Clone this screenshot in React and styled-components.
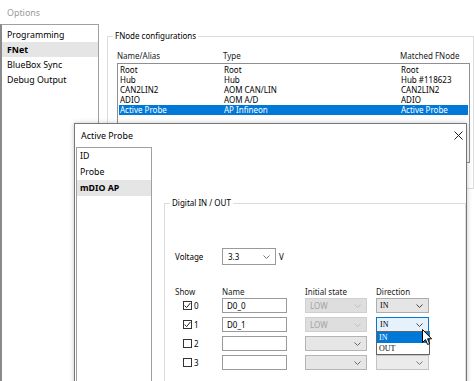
import React from 'react';
import styled, { createGlobalStyle } from 'styled-components';

const GlobalStyle = createGlobalStyle`
  html, body { margin: 0; padding: 0; background: #fff; }
  body { font-family: "Noto Sans", "Open Sans", sans-serif; color: #000; overflow: hidden; }
  * { box-sizing: border-box; }
`;

const Window = styled.div`
  position: relative;
  width: 474px;
  height: 381px;
  overflow: hidden;
  background: #fff;
  display: flex;
  flex-direction: column;
`;

const TitleBar = styled.div`
  height: 24px;
  flex: none;
  display: flex;
  align-items: center;
  padding: 1px 0 0 7px;
  font-size: 8.9px;
  color: #9a9a9a;
`;

const Body = styled.div`
  flex: 1;
  display: flex;
  min-height: 0;
`;

const SideNav = styled.div`
  width: 99px;
  flex: none;
  border: 1px solid #a0a0a0;
  border-left: 2px solid #8a8a8a;
  border-bottom: none;
  padding-top: 2px;
`;

const NavItem = styled.div`
  height: 15px;
  display: flex;
  align-items: center;
  padding-left: 5px;
  font-size: 8.8px;
  font-weight: ${p => (p.$active ? 700 : 400)};
  background: ${p => (p.$active ? '#e5e5e5' : 'transparent')};
`;

const Main = styled.div`
  flex: 1;
  padding-left: 8px;
  min-width: 0;
`;

const GroupBox = styled.fieldset`
  margin: ${p => p.$top}px 0 0 0;
  padding: ${p => p.$padTop}px 3px 0 ${p => p.$padLeft}px;
  border: 1px solid #dcdcdc;
  height: ${p => p.$height}px;
  min-inline-size: 0;
`;

const Legend = styled.legend`
  padding: 0 2px;
  margin-left: ${p => p.$offset}px;
  font-size: 8px;
  line-height: 12px;
  color: #000;
`;

const HeaderRow = styled.div`
  display: grid;
  grid-template-columns: ${p => p.$cols};
  font-size: 8px;
  line-height: 12px;
  height: 12px;
  color: #1a1a1a;
`;

const ListBox = styled.div`
  margin-top: 1px;
  border: 1px solid #8e8f94;
  height: 100px;
  padding: 1px;
  background: #fff;
`;

const ListRow = styled.div`
  display: grid;
  grid-template-columns: 104px 177px 1fr;
  height: 10px;
  line-height: 10px;
  padding-left: 1px;
  font-size: 8px;
  white-space: nowrap;
  background: ${p => (p.$selected ? '#0078d7' : 'transparent')};
  color: ${p => (p.$selected ? '#fff' : '#000')};
`;

const Dialog = styled.div`
  position: absolute;
  left: 74px;
  top: 123px;
  width: 393px;
  height: 272px;
  border: 1px solid #777;
  background: #fff;
  box-shadow: 0 0 5px rgba(0, 0, 0, 0.22);
  display: flex;
  flex-direction: column;
`;

const DialogTitle = styled.div`
  height: 23px;
  flex: none;
  display: flex;
  align-items: center;
  justify-content: space-between;
  padding: 0 0 1px 6px;
  font-size: 8.9px;
`;

const CloseButton = styled.div`
  width: 16px;
  height: 16px;
  display: flex;
  align-items: center;
  justify-content: center;
`;

const DialogBody = styled.div`
  flex: 1;
  display: flex;
  min-height: 0;
`;

const DialogNav = styled.div`
  width: 76px;
  flex: none;
  margin-left: 1px;
  border: 1px solid #a0a0a0;
  border-bottom: none;
`;

const DNavItem = styled.div`
  height: 16px;
  display: flex;
  align-items: center;
  padding-left: 3px;
  font-size: 8.8px;
  font-weight: ${p => (p.$active ? 700 : 400)};
  background: ${p => (p.$active ? '#e5e5e5' : 'transparent')};
`;

const DialogContent = styled.div`
  flex: 1;
  padding-left: 12px;
  min-width: 0;
`;

const VoltageRow = styled.div`
  margin-top: 39px;
  height: 17px;
  display: flex;
  align-items: center;
  font-size: 8px;
`;

const FieldLabel = styled.span`
  width: 47px;
  flex: none;
`;

const Unit = styled.span`
  margin-left: 3px;
`;

const Select = styled.div`
  position: relative;
  width: ${p => p.$w}px;
  height: ${p => p.$h}px;
  display: flex;
  align-items: center;
  justify-content: space-between;
  padding: 0 5px 0 ${p => p.$pl || 4}px;
  font-size: 8px;
  border: 1px solid ${p => p.$border};
  background: ${p => p.$bg};
  color: ${p => p.$color || '#000'};
  font-family: ${p => (p.$serif ? '"Liberation Serif", serif' : 'inherit')};
`;

const Table = styled.div`
  margin-top: 21px;
`;

const DataGrid = styled.div`
  display: grid;
  grid-template-columns: 47px 83px 71px 53px;
  grid-auto-rows: 15px;
  row-gap: 4px;
  font-size: 8px;
`;

const CheckCell = styled.div`
  display: flex;
  align-items: center;
  padding-left: 8px;
`;

const CheckBox = styled.span`
  width: 9px;
  height: 9px;
  border: 1px solid #333;
  background: #fff;
  display: flex;
  align-items: center;
  justify-content: center;
`;

const CheckLabel = styled.span`
  margin-left: 2px;
`;

const TextInput = styled.div`
  width: 65px;
  height: 15px;
  border: 1px solid #9a9a9a;
  display: flex;
  align-items: center;
  padding-left: 4px;
  background: #fff;
`;

const Popup = styled.div`
  position: absolute;
  left: -1px;
  top: 100%;
  width: 54px;
  border: 1px solid #646464;
  background: #fff;
  padding: 0;
  z-index: 2;
`;

const PopupItem = styled.div`
  height: 11px;
  line-height: 11px;
  padding-left: 2px;
  font-size: 8px;
  background: ${p => (p.$selected ? '#0078d7' : '#fff')};
  color: ${p => (p.$selected ? '#fff' : '#000')};
`;

const Cursor = styled.svg`
  position: absolute;
  left: 422px;
  top: 329px;
  z-index: 5;
`;

const Chevron = ({ color = '#555' }) => (
  <svg width="7" height="4" viewBox="0 0 7 4">
    <path d="M0.5 0.5 L3.5 3.5 L6.5 0.5" fill="none" stroke={color} strokeWidth="1" />
  </svg>
);

const Check = () => (
  <svg width="7" height="7" viewBox="0 0 7 7">
    <path d="M0.6 3.6 L2.6 5.6 L6.4 1" fill="none" stroke="#222" strokeWidth="1" />
  </svg>
);

const nodes = [
  ['Root', 'Root', 'Root'],
  ['Hub', 'Hub', 'Hub #118623'],
  ['CAN2LIN2', 'AOM CAN/LIN', 'CAN2LIN2'],
  ['ADIO', 'AOM A/D', 'ADIO'],
  ['Active Probe', 'AP Infineon', 'Active Probe'],
];

const dio = [
  { n: '0', checked: true, name: 'D0_0', init: 'LOW', dir: 'IN' },
  { n: '1', checked: true, name: 'D0_1', init: 'LOW', dir: 'IN', open: true },
  { n: '2', checked: false, name: '', init: '', dir: '' },
  { n: '3', checked: false, name: '', init: '', dir: '' },
];

export default function App() {
  return (
    <Window>
      <GlobalStyle />
      <TitleBar>Options</TitleBar>
      <Body>
        <SideNav>
          <NavItem>Programming</NavItem>
          <NavItem $active>FNet</NavItem>
          <NavItem>BlueBox Sync</NavItem>
          <NavItem>Debug Output</NavItem>
        </SideNav>
        <Main>
          <GroupBox $top={6} $padTop={8} $padLeft={9} $height={159}>
            <Legend $offset={-4}>FNode configurations</Legend>
            <HeaderRow $cols="106px 177px 1fr">
              <span>Name/Alias</span>
              <span>Type</span>
              <span>Matched FNode</span>
            </HeaderRow>
            <ListBox>
              {nodes.map((r, i) => (
                <ListRow key={i} $selected={i === 4}>
                  <span>{r[0]}</span>
                  <span>{r[1]}</span>
                  <span>{r[2]}</span>
                </ListRow>
              ))}
            </ListBox>
          </GroupBox>
        </Main>
      </Body>

      <Dialog>
        <DialogTitle>
          <span>Active Probe</span>
          <CloseButton>
            <svg width="9" height="9" viewBox="0 0 9 9">
              <path d="M0.5 0.5 L8.5 8.5 M8.5 0.5 L0.5 8.5" stroke="#222" strokeWidth="1" fill="none" />
            </svg>
          </CloseButton>
        </DialogTitle>
        <DialogBody>
          <DialogNav>
            <DNavItem>ID</DNavItem>
            <DNavItem>Probe</DNavItem>
            <DNavItem $active>mDIO AP</DNavItem>
          </DialogNav>
          <DialogContent>
            <GroupBox $top={50} $padTop={0} $padLeft={10} $height={260}>
              <Legend $offset={-5}>Digital IN / OUT</Legend>
              <VoltageRow>
                <FieldLabel>Voltage</FieldLabel>
                <Select $w={54} $h={17} $border="#9a9a9a" $bg="#fff" $pl={5}>
                  <span>3.3</span>
                  <Chevron color="#777" />
                </Select>
                <Unit>V</Unit>
              </VoltageRow>
              <Table>
                <HeaderRow $cols="47px 83px 71px 53px">
                  <span>Show</span>
                  <span>Name</span>
                  <span>Initial state</span>
                  <span>Direction</span>
                </HeaderRow>
                <DataGrid>
                  {dio.map(r => (
                    <React.Fragment key={r.n}>
                      <CheckCell>
                        <CheckBox>{r.checked && <Check />}</CheckBox>
                        <CheckLabel>{r.n}</CheckLabel>
                      </CheckCell>
                      <TextInput>{r.name}</TextInput>
                      {r.init ? (
                        <Select $w={62} $h={15} $border="#cfcfcf" $bg="#dedede" $color="#a3a3a3">
                          <span>{r.init}</span>
                          <Chevron color="#c0c0c0" />
                        </Select>
                      ) : (
                        <Select $w={62} $h={15} $border="#b4b4b4" $bg="#e6e6e6">
                          <span />
                          <Chevron color="#666" />
                        </Select>
                      )}
                      {r.open ? (
                        <Select $w={53} $h={15} $border="#0078d7" $bg="#e5f1fb" $pl={3} $serif>
                          <span>{r.dir}</span>
                          <Chevron color="#444" />
                          <Popup>
                            <PopupItem $selected>IN</PopupItem>
                            <PopupItem>OUT</PopupItem>
                          </Popup>
                        </Select>
                      ) : r.dir ? (
                        <Select $w={53} $h={15} $border="#adadad" $bg="#e5e5e5" $pl={3} $serif>
                          <span>{r.dir}</span>
                          <Chevron color="#444" />
                        </Select>
                      ) : (
                        <Select $w={53} $h={15} $border="#c4c4c4" $bg="#ebebeb">
                          <span />
                          <Chevron color="#777" />
                        </Select>
                      )}
                    </React.Fragment>
                  ))}
                </DataGrid>
              </Table>
            </GroupBox>
          </DialogContent>
        </DialogBody>
      </Dialog>

      <Cursor width="11" height="17" viewBox="0 0 11 17">
        <path d="M0.5 0.5 L0.5 13.5 L3.5 10.6 L5.6 15.5 L7.6 14.6 L5.6 9.8 L9.6 9.8 Z" fill="#fff" stroke="#000" strokeWidth="1" strokeLinejoin="round" />
      </Cursor>
    </Window>
  );
}
